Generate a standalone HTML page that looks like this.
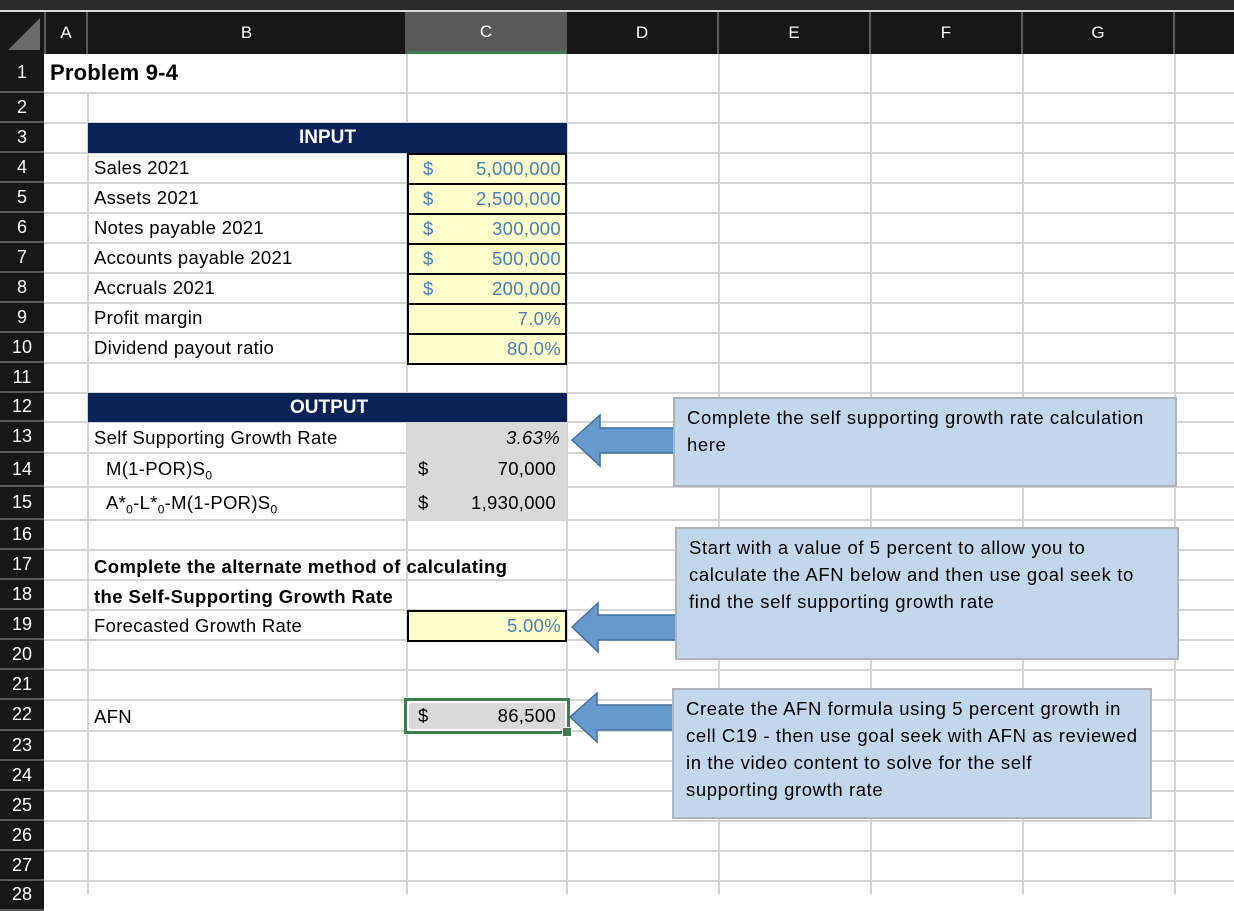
<!DOCTYPE html>
<html><head><meta charset="utf-8"><style>
*{margin:0;padding:0;box-sizing:border-box}
body{width:1234px;height:894px;overflow:hidden;background:#fff;position:relative;font-family:"Liberation Sans",Arial,sans-serif;color:#000}
.a{position:absolute}
.vl{position:absolute;width:2px;background:#d4d4d4}
.hl{position:absolute;height:2px;background:#d4d4d4;left:44px;right:0}
.rn{position:absolute;left:0;width:44px;color:#fff;font-size:18px;text-align:center;border-bottom:2px solid #5a5a5a;background:#171717;display:flex;align-items:center;justify-content:center}
.ch{position:absolute;top:12px;height:42px;color:#fff;font-size:17px;display:flex;align-items:center;justify-content:center;border-right:2px solid #5a5a5a}
.t{position:absolute;font-size:18.5px;letter-spacing:0.3px;white-space:nowrap}
.yc{position:absolute;left:407px;width:160px;background:#ffffcc;border:2px solid #000;color:#4a7ebb;font-size:18.5px;letter-spacing:0.3px}
.gc{position:absolute;left:407px;width:160px;background:#d9d9d9}
.d{position:absolute;left:14px}
.v{position:absolute;right:4px}
.box{position:absolute;background:#c2d6ec;border:2px solid #b0b4b8;font-size:18.5px;letter-spacing:0.6px;line-height:27px;padding:5px 12px;white-space:nowrap}
</style></head><body>
<div class="a" style="left:0;top:0;width:1234px;height:10px;background:#2a2a2a"></div>
<div class="a" style="left:0;top:10px;width:1234px;height:2px;background:#ddd"></div>
<div class="a" style="left:0;top:12px;width:1234px;height:42px;background:#171717"></div>
<svg class="a" style="left:8px;top:18px" width="32" height="32"><polygon points="32,0 32,32 0,32" fill="#6b6b6b"/></svg>
<div class="ch" style="left:44px;width:44px;border-left:2px solid #5a5a5a">A</div>
<div class="ch" style="left:88px;width:319px">B</div>
<div class="ch" style="left:407px;width:160px;background:#595959;border-bottom:3px solid #3f7d4f">C</div>
<div class="ch" style="left:567px;width:152px">D</div>
<div class="ch" style="left:719px;width:152px">E</div>
<div class="ch" style="left:871px;width:152px">F</div>
<div class="ch" style="left:1023px;width:152px">G</div>

<div class="rn" style="top:54px;height:39px">1</div>
<div class="rn" style="top:93px;height:30px">2</div>
<div class="rn" style="top:123px;height:30px">3</div>
<div class="rn" style="top:153px;height:30px">4</div>
<div class="rn" style="top:183px;height:30px">5</div>
<div class="rn" style="top:213px;height:30px">6</div>
<div class="rn" style="top:243px;height:30px">7</div>
<div class="rn" style="top:273px;height:30px">8</div>
<div class="rn" style="top:303px;height:30px">9</div>
<div class="rn" style="top:333px;height:30px">10</div>
<div class="rn" style="top:363px;height:30px">11</div>
<div class="rn" style="top:393px;height:29px">12</div>
<div class="rn" style="top:422px;height:31px">13</div>
<div class="rn" style="top:453px;height:34px">14</div>
<div class="rn" style="top:487px;height:33px">15</div>
<div class="rn" style="top:520px;height:30px">16</div>
<div class="rn" style="top:550px;height:30px">17</div>
<div class="rn" style="top:580px;height:30px">18</div>
<div class="rn" style="top:610px;height:30px">19</div>
<div class="rn" style="top:640px;height:30px">20</div>
<div class="rn" style="top:670px;height:30px">21</div>
<div class="rn" style="top:700px;height:31px">22</div>
<div class="rn" style="top:731px;height:30px">23</div>
<div class="rn" style="top:761px;height:30px">24</div>
<div class="rn" style="top:791px;height:30px">25</div>
<div class="rn" style="top:821px;height:30px">26</div>
<div class="rn" style="top:851px;height:30px">27</div>
<div class="rn" style="top:881px;height:30px;align-items:flex-start;padding-top:3px">28</div>

<div class="vl" style="left:87px;top:93px;height:801px"></div>
<div class="vl" style="left:406px;top:54px;height:840px"></div>
<div class="vl" style="left:566px;top:54px;height:840px"></div>
<div class="vl" style="left:718px;top:54px;height:840px"></div>
<div class="vl" style="left:870px;top:54px;height:840px"></div>
<div class="vl" style="left:1022px;top:54px;height:840px"></div>
<div class="vl" style="left:1174px;top:54px;height:840px"></div>
<div class="hl" style="top:92px"></div><div class="hl" style="top:122px"></div>
<div class="hl" style="top:152px"></div><div class="hl" style="top:182px"></div>
<div class="hl" style="top:212px"></div><div class="hl" style="top:242px"></div>
<div class="hl" style="top:272px"></div><div class="hl" style="top:302px"></div>
<div class="hl" style="top:332px"></div><div class="hl" style="top:362px"></div>
<div class="hl" style="top:392px"></div><div class="hl" style="top:421px"></div>
<div class="hl" style="top:452px"></div><div class="hl" style="top:486px"></div>
<div class="hl" style="top:519px"></div><div class="hl" style="top:549px"></div>
<div class="hl" style="top:579px"></div><div class="hl" style="top:609px"></div>
<div class="hl" style="top:639px"></div><div class="hl" style="top:669px"></div>
<div class="hl" style="top:699px"></div><div class="hl" style="top:730px"></div>
<div class="hl" style="top:760px"></div><div class="hl" style="top:790px"></div>
<div class="hl" style="top:820px"></div><div class="hl" style="top:850px"></div>
<div class="hl" style="top:880px"></div>

<div class="t" style="left:50px;top:60px;font-size:22px;font-weight:bold;background:#fff;padding-right:4px;letter-spacing:0.2px">Problem 9-4</div>

<div class="a" style="left:88px;top:123px;width:479px;height:30px;background:#0a2257;color:#fff;font-weight:bold;font-size:19px;line-height:30px"><span style="position:absolute;left:211px">INPUT</span></div>
<div class="a" style="left:88px;top:393px;width:479px;height:29px;background:#0a2257;color:#fff;font-weight:bold;font-size:19px;line-height:30px"><span style="position:absolute;left:202px">OUTPUT</span></div>

<div class="t" style="left:94px;top:157px">Sales 2021</div>
<div class="t" style="left:94px;top:187px">Assets 2021</div>
<div class="t" style="left:94px;top:217px">Notes payable 2021</div>
<div class="t" style="left:94px;top:247px">Accounts payable 2021</div>
<div class="t" style="left:94px;top:277px">Accruals 2021</div>
<div class="t" style="left:94px;top:307px">Profit margin</div>
<div class="t" style="left:94px;top:337px">Dividend payout ratio</div>

<div class="yc" style="top:153px;height:32px"><span class="d" style="top:3px">$</span><span class="v" style="top:3px">5,000,000</span></div>
<div class="yc" style="top:183px;height:32px"><span class="d" style="top:3px">$</span><span class="v" style="top:3px">2,500,000</span></div>
<div class="yc" style="top:213px;height:32px"><span class="d" style="top:3px">$</span><span class="v" style="top:3px">300,000</span></div>
<div class="yc" style="top:243px;height:32px"><span class="d" style="top:3px">$</span><span class="v" style="top:3px">500,000</span></div>
<div class="yc" style="top:273px;height:32px"><span class="d" style="top:3px">$</span><span class="v" style="top:3px">200,000</span></div>
<div class="yc" style="top:303px;height:32px"><span class="v" style="top:3px">7.0%</span></div>
<div class="yc" style="top:333px;height:32px"><span class="v" style="top:3px">80.0%</span></div>

<div class="t" style="left:94px;top:427px">Self Supporting Growth Rate</div>
<div class="t" style="left:106px;top:458px">M(1-POR)S<sub style="font-size:12px">0</sub></div>
<div class="t" style="left:106px;top:492px">A*<sub style="font-size:12px">0</sub>-L*<sub style="font-size:12px">0</sub>-M(1-POR)S<sub style="font-size:12px">0</sub></div>
<div class="gc" style="top:422px;height:98px"></div>
<div class="t" style="left:400px;top:427px;width:160px;text-align:right;font-style:italic">3.63%</div>
<div class="t" style="left:418px;top:458px">$</div><div class="t" style="left:400px;top:458px;width:156px;text-align:right">70,000</div>
<div class="t" style="left:418px;top:492px">$</div><div class="t" style="left:400px;top:492px;width:156px;text-align:right">1,930,000</div>

<div class="t" style="left:94px;top:556px;font-weight:bold;font-size:18.5px;letter-spacing:0.4px">Complete the alternate method of calculating</div>
<div class="t" style="left:94px;top:586px;font-weight:bold;font-size:18.5px;letter-spacing:0.4px">the Self-Supporting Growth Rate</div>
<div class="t" style="left:94px;top:615px">Forecasted Growth Rate</div>
<div class="yc" style="top:610px;height:32px"><span class="v" style="top:3px">5.00%</span></div>

<div class="t" style="left:94px;top:706px">AFN</div>
<div class="a" style="left:404px;top:698px;width:166px;height:36px;border:3px solid #3f7d4f;background:#fff"></div>
<div class="a" style="left:409px;top:703px;width:156px;height:26px;background:#d9d9d9"></div>
<div class="t" style="left:418px;top:705px">$</div><div class="t" style="left:400px;top:705px;width:156px;text-align:right">86,500</div>
<div class="a" style="left:562px;top:727px;width:10px;height:10px;background:#3f7d4f;border:1px solid #fff"></div>

<svg class="a" style="left:0;top:0" width="1234" height="894">
<polygon points="572,440 600,415 600,428 676,428 676,453 600,453 600,466" fill="#6699cc" stroke="#41719c" stroke-width="1.5"/>
<polygon points="572,627 598,603 598,615 676,615 676,640 598,640 598,652" fill="#6699cc" stroke="#41719c" stroke-width="1.5"/>
<polygon points="570,717 597,693 597,705 673,705 673,730 597,730 597,742" fill="#6699cc" stroke="#41719c" stroke-width="1.5"/>
</svg>

<div class="box" style="left:673px;top:397px;width:504px;height:90px">Complete the self supporting growth rate calculation<br>here</div>
<div class="box" style="left:675px;top:527px;width:504px;height:133px">Start with a value of 5 percent to allow you to<br>calculate the AFN below and then use goal seek to<br>find the self supporting growth rate</div>
<div class="box" style="left:672px;top:688px;width:480px;height:131px">Create the AFN formula using 5 percent growth in<br>cell C19 - then use goal seek with AFN as reviewed<br>in the video content to solve for the self<br>supporting growth rate</div>
</body></html>
